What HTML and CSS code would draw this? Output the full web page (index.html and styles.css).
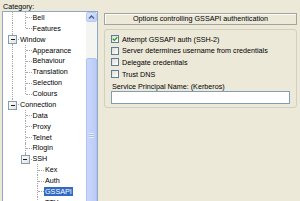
FILE: index.html
```html
<!DOCTYPE html>
<html lang="en">
<head>
    <meta charset="UTF-8">
    <link rel="stylesheet" href="styles.css">
</head>
<body>
    <div class="dialog">
        <div class="category">
            <div class="category-label">Category:</div>
            <div class="tree">
                <div class="tree-list">
                    <div class="row"><span class="c g"></span><span class="c t"></span><span class="name">Bell</span></div>
                    <div class="row"><span class="c g"></span><span class="c l"></span><span class="name">Features</span></div>
                    <div class="row"><span class="c t"><span class="toggle"></span></span><span class="name">Window</span></div>
                    <div class="row"><span class="c g"></span><span class="c t"></span><span class="name">Appearance</span></div>
                    <div class="row"><span class="c g"></span><span class="c t"></span><span class="name">Behaviour</span></div>
                    <div class="row"><span class="c g"></span><span class="c t"></span><span class="name">Translation</span></div>
                    <div class="row"><span class="c g"></span><span class="c t"></span><span class="name">Selection</span></div>
                    <div class="row"><span class="c g"></span><span class="c l"></span><span class="name">Colours</span></div>
                    <div class="row"><span class="c l"><span class="toggle"></span></span><span class="name">Connection</span></div>
                    <div class="row"><span class="c"></span><span class="c t"></span><span class="name">Data</span></div>
                    <div class="row"><span class="c"></span><span class="c t"></span><span class="name">Proxy</span></div>
                    <div class="row"><span class="c"></span><span class="c t"></span><span class="name">Telnet</span></div>
                    <div class="row"><span class="c"></span><span class="c t"></span><span class="name">Rlogin</span></div>
                    <div class="row"><span class="c"></span><span class="c l"><span class="toggle"></span></span><span class="name">SSH</span></div>
                    <div class="row"><span class="c"></span><span class="c"></span><span class="c t"></span><span class="name">Kex</span></div>
                    <div class="row"><span class="c"></span><span class="c"></span><span class="c t"></span><span class="name">Auth</span></div>
                    <div class="row"><span class="c"></span><span class="c"></span><span class="c t"></span><span class="name sel">GSSAPI</span></div>
                    <div class="row"><span class="c"></span><span class="c"></span><span class="c t"></span><span class="name">TTY</span></div>
                </div>
                <div class="scroll">
                    <div class="scroll-up">
                        <svg width="9" height="8" viewBox="0 0 9 8"><path d="M2 5.5 L4.5 3 L7 5.5" fill="none" stroke="#4d6185" stroke-width="1.4"/></svg>
                    </div>
                    <div class="thumb"><span class="grip"></span></div>
                </div>
            </div>
        </div>

        <div class="panel">
            <div class="heading">Options controlling GSSAPI authentication</div>
            <div class="group">
                <div class="check-row">
                    <span class="box">
                        <svg width="6" height="6" viewBox="0 0 6 6"><path d="M0.8 2.8 L2.4 4.4 L5.3 1.2" fill="none" stroke="#21a121" stroke-width="1.3"/></svg>
                    </span>
                    <span>Attempt GSSAPI auth (SSH-2)</span>
                </div>
                <div class="check-row"><span class="box"></span><span>Server determines username from credentials</span></div>
                <div class="check-row"><span class="box"></span><span>Delegate credentials</span></div>
                <div class="check-row"><span class="box"></span><span>Trust DNS</span></div>
                <div class="field-label">Service Principal Name: (Kerberos)</div>
                <div class="field"></div>
            </div>
        </div>
    </div>
</body>
</html>
```

FILE: styles.css
```css
body {
    margin: 0;
    width: 300px;
    height: 201px;
    overflow: hidden;
    background-color: #ece9d8;
    font-family: "Liberation Sans", Arial, sans-serif;
    font-size: 7.2px;
    color: #000;
}
.dialog {
    display: flex;
    height: 201px;
}

/* left side: category tree */
.category {
    flex: none;
    width: 96px;
    padding-left: 2px;
}
.category-label {
    padding: 2px 0 0 1px;
    height: 9px;
    line-height: 9px;
}
.tree {
    display: flex;
    height: 200px;
    border: 1px solid #8fa8c4;
    background: white;
}
.tree-list {
    flex: 1;
    padding-left: 3px;
    overflow: hidden;
}
.row {
    display: flex;
    align-items: center;
    height: 10.875px;
    white-space: nowrap;
}
.c {
    flex: none;
    position: relative;
    width: 12.5px;
    height: 100%;
}
.c.g::before,
.c.t::before,
.c.l::before {
    content: "";
    position: absolute;
    left: 6px;
    top: 0;
    bottom: 0;
    border-left: 1px dotted #a8a8a8;
}
.c.l::before {
    bottom: 50%;
}
.c.t::after,
.c.l::after {
    content: "";
    position: absolute;
    left: 7px;
    top: 50%;
    width: 6px;
    border-top: 1px dotted #a8a8a8;
}
.toggle {
    position: absolute;
    z-index: 1;
    left: 2px;
    top: 1.5px;
    width: 7px;
    height: 7px;
    border: 1px solid #7f9db9;
    background: linear-gradient(135deg, #fff, #e4e2da);
}
.toggle::after {
    content: "";
    position: absolute;
    left: 1.5px;
    top: 3px;
    width: 4px;
    height: 1px;
    background: #1a1a1a;
}
.name {
    margin-left: 0.5px;
    padding: 0 1px;
    height: 9px;
    line-height: 9px;
}
.name.sel {
    background-color: #316ac5;
    color: white;
}

.scroll {
    flex: none;
    width: 11px;
    display: flex;
    flex-direction: column;
    background: #f4f4f0;
}
.scroll-up {
    height: 10px;
    box-sizing: border-box;
    border: 1px solid #b7c8f3;
    border-radius: 2px;
    background: linear-gradient(135deg, #dce6fd, #bccdf8);
    display: flex;
    align-items: center;
    justify-content: center;
}
.thumb {
    margin-top: 36px;
    height: 178px;
    box-sizing: border-box;
    border: 1px solid #b0c2ef;
    border-radius: 2px;
    background: linear-gradient(90deg, #c9d7fb, #bccbf7);
    display: flex;
    align-items: center;
    justify-content: center;
}
.grip {
    width: 5px;
    height: 5px;
    background: repeating-linear-gradient(#e8eefd 0 1px, #a9bbe9 1px 2px);
}

/* right side: options panel */
.panel {
    flex: 1;
    padding: 13px 3px 0 6px;
}
.heading {
    height: 10px;
    line-height: 10px;
    border: 1px solid #a3a3a0;
    box-shadow: inset 1px 1px #fbfbf8;
    text-align: center;
}
.group {
    margin-top: 4px;
    padding: 3.3px 6px 3px;
    border: 1px solid #d0d0bf;
    border-radius: 3px;
}
.check-row {
    display: flex;
    align-items: center;
    gap: 3px;
    height: 11.67px;
    white-space: nowrap;
}
.box {
    flex: none;
    width: 6px;
    height: 6px;
    border: 1px solid #5f7d99;
    background: linear-gradient(135deg, #dcdcd6, #fff);
    display: flex;
}
.field-label {
    margin-top: 2px;
    padding-left: 1px;
    height: 9px;
    line-height: 9px;
}
.field {
    height: 11px;
    border: 1px solid #7f9db9;
    background: white;
}
```
